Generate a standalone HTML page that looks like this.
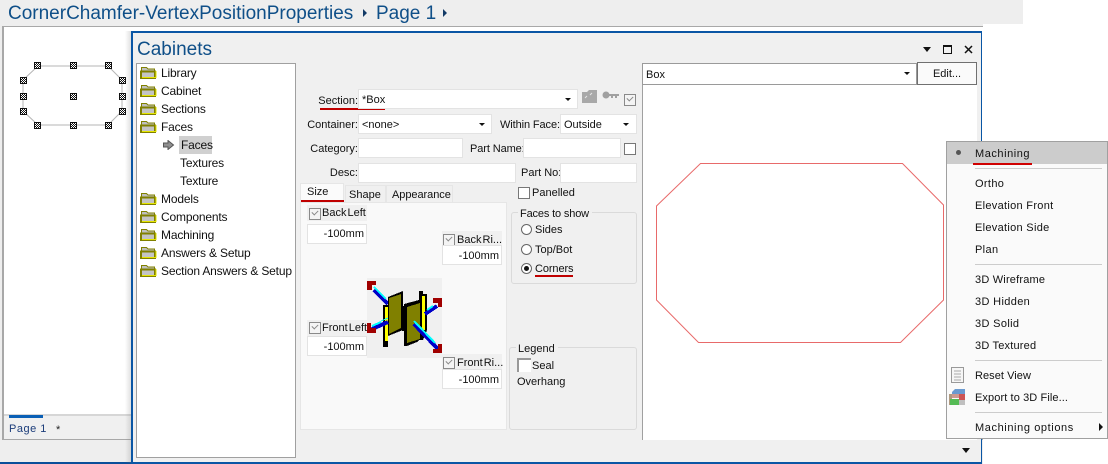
<!DOCTYPE html>
<html><head><meta charset="utf-8">
<style>
html,body{margin:0;padding:0;width:1108px;height:464px;overflow:hidden;background:#fff}
body{position:relative;font-family:"Liberation Sans",sans-serif;font-size:11px;color:#111}
.a{position:absolute;box-sizing:border-box}
.t{position:absolute;white-space:nowrap;line-height:14px;margin-top:1px}
.r{text-align:right}
.f{position:absolute;box-sizing:border-box;background:#fff;border:1px solid #e3e3e3;line-height:18px;padding-left:3px;padding-top:1px;white-space:nowrap}
.n{position:absolute;box-sizing:border-box;background:#fff;border:1px solid #e3e3e3;line-height:18px;padding-right:2px;text-align:right}
.tree{position:absolute;left:161px;line-height:14px;white-space:nowrap;font-size:12px;letter-spacing:-.17px}
.fo{position:absolute;left:140px;width:17px;height:13px}
.ar{position:absolute;width:0;height:0;border-left:3px solid transparent;border-right:3px solid transparent;border-top:3px solid #111}
.cb{position:absolute;box-sizing:border-box;width:12px;height:12px;border:1px solid #777;background:#fff}
.ck{position:absolute;box-sizing:border-box;width:12px;height:12px;border:1px solid #8a8a8a;background:#f4f4f4}
.ck:after{content:"";position:absolute;left:2px;top:1px;width:5px;height:3px;border-left:1.5px solid #888;border-bottom:1.5px solid #888;transform:rotate(-45deg)}
.rd{position:absolute;box-sizing:border-box;width:11px;height:11px;border-radius:50%;border:1px solid #666;background:#fff}
.ul{position:absolute;height:2px;background:#c00000}
.h{position:absolute;width:7px;height:7px;background:repeating-conic-gradient(#111 0 25%,#fff 0 50%) 0 0/2px 2px;border:1px solid #111;box-sizing:border-box}
.m{position:absolute;left:975px;line-height:14px;white-space:nowrap;letter-spacing:.35px;font-size:11px;color:#111}
.s{position:absolute;left:975px;width:127px;height:1px;background:#ccc}
.l{position:absolute;box-sizing:border-box;border:1px solid #dadada;border-radius:3px}
.w{word-spacing:-2px}
</style></head><body>
<!-- top bar -->
<div class="a" style="left:0;top:0;width:1023px;height:24px;background:#eeeeee"></div>
<div class="a" style="left:0;top:24px;width:983px;height:440px;background:#eeeeee"></div>
<div class="t" style="left:8px;top:2px;font-size:19px;line-height:22px;color:#0f4f88">CornerChamfer-VertexPositionProperties</div>
<div class="a" style="left:363px;top:9px;border-left:4px solid #123a66;border-top:4px solid transparent;border-bottom:4px solid transparent"></div>
<div class="t" style="left:376px;top:2px;font-size:19px;line-height:22px;color:#0f4f88">Page 1</div>
<div class="a" style="left:443px;top:9px;border-left:4px solid #123a66;border-top:4px solid transparent;border-bottom:4px solid transparent"></div>
<!-- outer window -->
<div class="a" style="left:2px;top:26px;width:981px;height:414px;background:#fff;border:2px solid #a8a8a8;border-right:0;border-top-width:1px"></div>
<div class="a" style="left:4px;top:414px;width:127px;height:25px;background:#f0f0f0;border-top:2px solid #d6d6d6"></div>
<div class="a" style="left:9px;top:415px;width:34px;height:3px;background:#0a5fb5"></div>
<div class="t" style="left:9px;top:421px;font-size:11px;letter-spacing:.5px;color:#1c3d7a">Page 1</div>
<div class="t" style="left:56px;top:422px;font-size:11px;color:#222">*</div>
<div class="a" style="left:0;top:462px;width:135px;height:2px;background:#0a4f9a"></div>
<!-- sketch -->
<svg class="a" style="left:0;top:40px" width="140" height="100"><path d="M38 26H108L122 40V71L108 85H38L23 71V40Z" fill="none" stroke="#b5b5b5" stroke-width="1"/></svg>
<div class="h" style="left:34px;top:62px"></div><div class="h" style="left:70px;top:62px"></div><div class="h" style="left:105px;top:62px"></div>
<div class="h" style="left:20px;top:77px"></div><div class="h" style="left:119px;top:77px"></div>
<div class="h" style="left:20px;top:93px"></div><div class="h" style="left:70px;top:93px"></div><div class="h" style="left:119px;top:93px"></div>
<div class="h" style="left:20px;top:108px"></div><div class="h" style="left:119px;top:108px"></div>
<div class="h" style="left:34px;top:122px"></div><div class="h" style="left:70px;top:122px"></div><div class="h" style="left:105px;top:122px"></div>
<!-- dialog -->
<div class="a" style="left:125px;top:31px;width:8px;height:432px;background:linear-gradient(90deg,rgba(120,120,120,0),rgba(120,120,120,.3))"></div>
<div class="a" style="left:131px;top:31px;width:851px;height:433px;background:#f0f0f0;border:2px solid #0a56a5;border-right-width:1px"></div>
<div class="t" style="left:137px;top:38px;font-size:19px;line-height:22px;color:#0f4f88">Cabinets</div>
<div class="a" style="left:923px;top:47px;border-top:5px solid #111;border-left:4px solid transparent;border-right:4px solid transparent"></div>
<div class="a" style="left:943px;top:45px;width:9px;height:9px;border:1px solid #111;border-top-width:2px"></div>
<svg class="a" style="left:964px;top:45px" width="9" height="9"><path d="M1 1L8 8M8 1L1 8" stroke="#111" stroke-width="1.5"/></svg>
<!-- tree -->
<div class="a" style="left:136px;top:63px;width:160px;height:395px;background:#fff;border:1px solid #a0a0a0"></div>
<svg width="0" height="0" style="position:absolute"><defs><symbol id="fd" viewBox="0 0 17 13"><path d="M1.500 4V1.500H6.500L8 3H14.500V6H2Z" fill="#c0c0c0" stroke="#808000"/><path d="M1 5.500H15V12H1Z" fill="#c4c4c4" stroke="#808000" stroke-width="2"/><path d="M2 11.500H16V5" fill="none" stroke="#e6e600" stroke-width="1"/></symbol></defs></svg>
<svg class="fo" style="top:66px"><use href="#fd"/></svg><div class="tree" style="top:66px">Library</div>
<svg class="fo" style="top:84px"><use href="#fd"/></svg><div class="tree" style="top:84px">Cabinet</div>
<svg class="fo" style="top:102px"><use href="#fd"/></svg><div class="tree" style="top:102px">Sections</div>
<svg class="fo" style="top:120px"><use href="#fd"/></svg><div class="tree" style="top:120px">Faces</div>
<svg class="a" style="left:163px;top:140px" width="12" height="10"><path d="M0.500 3H5V0.500L10.500 5L5 9.500V7H0.500Z" fill="#909090" stroke="#555" stroke-width="1"/></svg>
<div class="a" style="left:179px;top:136px;width:33px;height:18px;background:#d0d0d0"></div>
<div class="tree" style="left:181px;top:138px">Faces</div>
<div class="tree" style="left:180px;top:156px">Textures</div>
<div class="tree" style="left:180px;top:174px">Texture</div>
<svg class="fo" style="top:192px"><use href="#fd"/></svg><div class="tree" style="top:192px">Models</div>
<svg class="fo" style="top:210px"><use href="#fd"/></svg><div class="tree" style="top:210px">Components</div>
<svg class="fo" style="top:228px"><use href="#fd"/></svg><div class="tree" style="top:228px">Machining</div>
<svg class="fo" style="top:246px"><use href="#fd"/></svg><div class="tree" style="top:246px">Answers &amp; Setup</div>
<svg class="fo" style="top:264px"><use href="#fd"/></svg><div class="tree" style="top:264px">Section Answers &amp; Setup</div>
<!-- form -->
<div class="t r" style="left:300px;width:58px;top:93px">Section:</div>
<div class="ul" style="left:320px;top:108px;width:65px"></div>
<div class="f" style="left:358px;top:89px;width:220px;height:20px">*Box</div>
<div class="ar" style="left:565px;top:98px"></div>
<svg class="a" style="left:582px;top:90px" width="16" height="13"><path d="M0 2H5L7 0H15V13H0Z" fill="#a8a8a8"/><path d="M3 8L5 6M8 5L10 3" stroke="#e4e4e4"/></svg>
<svg class="a" style="left:602px;top:91px" width="17" height="9"><circle cx="4" cy="4" r="3.500" fill="#a0a0a0"/><path d="M6 3H17V5H15V7H13V5H11V7H9V5H6Z" fill="#a0a0a0"/></svg>
<div class="ck" style="left:624px;top:94px"></div>
<div class="t r" style="left:300px;width:58px;top:117px">Container:</div>
<div class="f" style="left:358px;top:114px;width:134px;height:20px;">&lt;none&gt;</div>
<div class="ar" style="left:479px;top:123px"></div>
<div class="t" style="left:500px;top:117px;letter-spacing:-.1px">Within Face:</div>
<div class="f" style="left:560px;top:114px;width:77px;height:20px">Outside</div>
<div class="ar" style="left:623px;top:123px"></div>
<div class="t r" style="left:300px;width:58px;top:141px">Category:</div>
<div class="f" style="left:358px;top:138px;width:105px;height:20px"></div>
<div class="t" style="left:470px;top:141px;letter-spacing:-.1px">Part Name:</div>
<div class="f" style="left:523px;top:138px;width:98px;height:20px"></div>
<div class="cb" style="left:624px;top:143px"></div>
<div class="t r" style="left:300px;width:58px;top:165px">Desc:</div>
<div class="f" style="left:358px;top:163px;width:158px;height:20px"></div>
<div class="t" style="left:521px;top:165px">Part No:</div>
<div class="f" style="left:560px;top:163px;width:77px;height:20px"></div>
<div class="cb" style="left:518px;top:187px"></div>
<div class="t" style="left:532px;top:185px">Panelled</div>
<!-- tabs -->
<div class="a" style="left:345px;top:185px;width:41px;height:18px;background:#f0f0f0;border:1px solid #e6e6e6"></div>
<div class="a" style="left:386px;top:185px;width:67px;height:18px;background:#f0f0f0;border:1px solid #e6e6e6"></div>
<div class="a" style="left:300px;top:183px;width:44px;height:20px;background:#fbfbfb;border:1px solid #e6e6e6;border-bottom:0"></div>
<div class="a" style="left:300px;top:202px;width:207px;height:228px;background:#f9f9f9;border:1px solid #e6e6e6"></div>
<div class="t" style="left:307px;top:184px">Size</div>
<div class="ul" style="left:301px;top:200px;width:43px"></div>
<div class="t" style="left:349px;top:187px">Shape</div>
<div class="t" style="left:392px;top:187px;letter-spacing:-.05px">Appearance</div>
<!-- corners -->
<div class="a" style="left:307px;top:205px;width:60px;height:16px;background:#f0f0f0"></div>
<div class="ck" style="left:309px;top:208px"></div>
<div class="t w" style="left:322px;top:205px">Back Left</div>
<div class="n" style="left:307px;top:224px;width:60px;height:20px">-100mm</div>
<div class="a" style="left:442px;top:231px;width:60px;height:15px;background:#f0f0f0"></div>
<div class="ck" style="left:443px;top:234px"></div>
<div class="t w" style="left:457px;top:232px">Back Ri...</div>
<div class="n" style="left:442px;top:245px;width:60px;height:20px;padding-top:1px">-100mm</div>
<div class="a" style="left:307px;top:320px;width:60px;height:16px;background:#f0f0f0"></div>
<div class="ck" style="left:309px;top:322px"></div>
<div class="t w" style="left:322px;top:320px">Front Left</div>
<div class="n" style="left:307px;top:336px;width:60px;height:20px;padding-top:1px">-100mm</div>
<div class="a" style="left:442px;top:354px;width:60px;height:16px;background:#f0f0f0"></div>
<div class="ck" style="left:443px;top:357px"></div>
<div class="t w" style="left:457px;top:355px">Front Ri...</div>
<div class="n" style="left:442px;top:369px;width:60px;height:20px;padding-top:1px">-100mm</div>
<!-- picture -->
<svg class="a" style="left:367px;top:278px" width="75" height="80" shape-rendering="crispEdges">
<rect width="75" height="80" fill="#f0f0f0"/>
<path d="M7 12L21 26" stroke="#0000c8" stroke-width="4"/><path d="M7 9L19 21" stroke="#00ffff" stroke-width="2"/>
<path d="M0 3H9V7H5V12H0Z" fill="#a00000"/>
<path d="M16 27H21V19L36 13V52L21 58V69H16Z" fill="#000"/>
<path d="M22 20L34 16V50L22 56Z" fill="#808000"/>
<rect x="18" y="29" width="3" height="34" fill="#ffff00"/>
<rect x="35" y="28" width="6" height="25" fill="#000"/>
<path d="M37 26L52 22V13H56V16H60V52L56 62H52L50 64L40 68H37Z" fill="#000"/>
<path d="M40 29L53 25V61L40 65Z" fill="#808000"/>
<rect x="55" y="18" width="3" height="34" fill="#ffff00"/>
<path d="M5 51L21 44" stroke="#0000c8" stroke-width="4"/><path d="M5 48L14 44" stroke="#00ffff" stroke-width="2"/><path d="M14 43L21 40" stroke="#00ffff" stroke-width="1"/>
<path d="M0 45H4V50H9V55H0Z" fill="#a00000"/>
<path d="M58 36L70 28" stroke="#0000c8" stroke-width="4"/><path d="M60 32L66 28" stroke="#00ffff" stroke-width="2"/>
<path d="M66 20H75V29H71V25H66Z" fill="#a00000"/>
<path d="M47 46L71 71" stroke="#0000c8" stroke-width="4"/><path d="M47 43L68 65" stroke="#00ffff" stroke-width="2"/>
<path d="M71 66H75V75H66V71H71Z" fill="#a00000"/>
</svg>
<!-- faces group -->
<div class="l" style="left:511px;top:212px;width:126px;height:72px"></div>
<div class="t" style="left:518px;top:206px;background:#f0f0f0;padding:0 3px 0 2px;letter-spacing:-.15px">Faces to show</div>
<div class="rd" style="left:521px;top:224px"></div><div class="t" style="left:535px;top:222px">Sides</div>
<div class="rd" style="left:521px;top:244px"></div><div class="t" style="left:535px;top:242px">Top/Bot</div>
<div class="rd" style="left:521px;top:263px"></div><div class="a" style="left:524px;top:266px;width:5px;height:5px;border-radius:50%;background:#111"></div>
<div class="t" style="left:535px;top:261px;letter-spacing:-.1px">Corners</div>
<div class="ul" style="left:535px;top:275px;width:38px"></div>
<!-- legend -->
<div class="l" style="left:509px;top:347px;width:128px;height:83px"></div>
<div class="t" style="left:516px;top:341px;background:#f0f0f0;padding:0 3px 0 2px">Legend</div>
<div class="a" style="left:517px;top:358px;width:14px;height:14px;background:#fff;border:2px solid #999;border-right:0;border-bottom:0"></div>
<div class="t" style="left:532px;top:358px">Seal</div>
<div class="t" style="left:517px;top:374px">Overhang</div>
<!-- right view -->
<div class="a" style="left:642px;top:63px;width:335px;height:377px;background:#fff;border-left:1px solid #a0a0a0"></div>
<div class="a" style="left:642px;top:63px;width:275px;height:22px;background:#fff;border:1px solid #9a9a9a"></div>
<div class="t" style="left:646px;top:67px">Box</div>
<div class="ar" style="left:904px;top:72px"></div>
<div class="a" style="left:917px;top:62px;width:60px;height:23px;background:#fafafa;border:1px solid #707070;text-align:center;line-height:21px;padding-top:1px">Edit...</div>
<svg class="a" style="left:640px;top:150px" width="320" height="205"><path d="M60.500 13.500H262.500L303.500 55V150L260.500 192.500H58.500L16.500 150V56Z" fill="none" stroke="#e86a6a" stroke-width="1"/></svg>
<div class="a" style="left:962px;top:448px;border-top:5px solid #111;border-left:4px solid transparent;border-right:4px solid transparent"></div>
<!-- menu -->
<div class="a" style="left:946px;top:141px;width:162px;height:298px;background:#fafafa;border:1px solid #a0a0a0"></div>
<div class="a" style="left:947px;top:142px;width:160px;height:22px;background:#cccccc"></div>
<div class="a" style="left:956px;top:150px;width:5px;height:5px;border-radius:50%;background:#555"></div>
<div class="m" style="top:147px;letter-spacing:.55px">Machining</div>
<div class="a" style="left:973px;top:163px;width:59px;height:2px;background:#d00000"></div>
<div class="s" style="top:168px"></div>
<div class="m" style="top:177px">Ortho</div>
<div class="m" style="top:199px;letter-spacing:.3px">Elevation Front</div>
<div class="m" style="top:221px;letter-spacing:.3px">Elevation Side</div>
<div class="m" style="top:243px">Plan</div>
<div class="s" style="top:264px"></div>
<div class="m" style="top:273px;letter-spacing:.2px">3D Wireframe</div>
<div class="m" style="top:295px">3D Hidden</div>
<div class="m" style="top:317px">3D Solid</div>
<div class="m" style="top:339px;letter-spacing:.2px">3D Textured</div>
<div class="s" style="top:360px"></div>
<svg class="a" style="left:951px;top:367px" width="13" height="16"><path d="M.5.500H12.500V15.500H.5Z" fill="#f6f6f6" stroke="#999"/><path d="M3 4H10M3 7H10M3 10H10M3 13H10" stroke="#aaa"/></svg>
<div class="m" style="top:369px;letter-spacing:.05px">Reset View</div>
<svg class="a" style="left:949px;top:389px" width="16" height="16"><path d="M3 3L6 0H16V5H3Z" fill="#6a9ad0"/><path d="M0 5H3V16H0Z" fill="#b09a80"/><path d="M3 5H10V9H3Z" fill="#cc9a90"/><path d="M10 5H16V11H10Z" fill="#cc5555"/><path d="M1 10H10V16H1Z" fill="#55bb55"/><path d="M10 11H16V16H10Z" fill="#c0c0c0"/></svg>
<div class="m" style="top:391px;letter-spacing:.1px">Export to 3D File...</div>
<div class="s" style="top:412px"></div>
<div class="m" style="top:421px;letter-spacing:.6px">Machining options</div>
<div class="a" style="left:1099px;top:423px;border-left:4px solid #111;border-top:4px solid transparent;border-bottom:4px solid transparent"></div>
</body></html>
